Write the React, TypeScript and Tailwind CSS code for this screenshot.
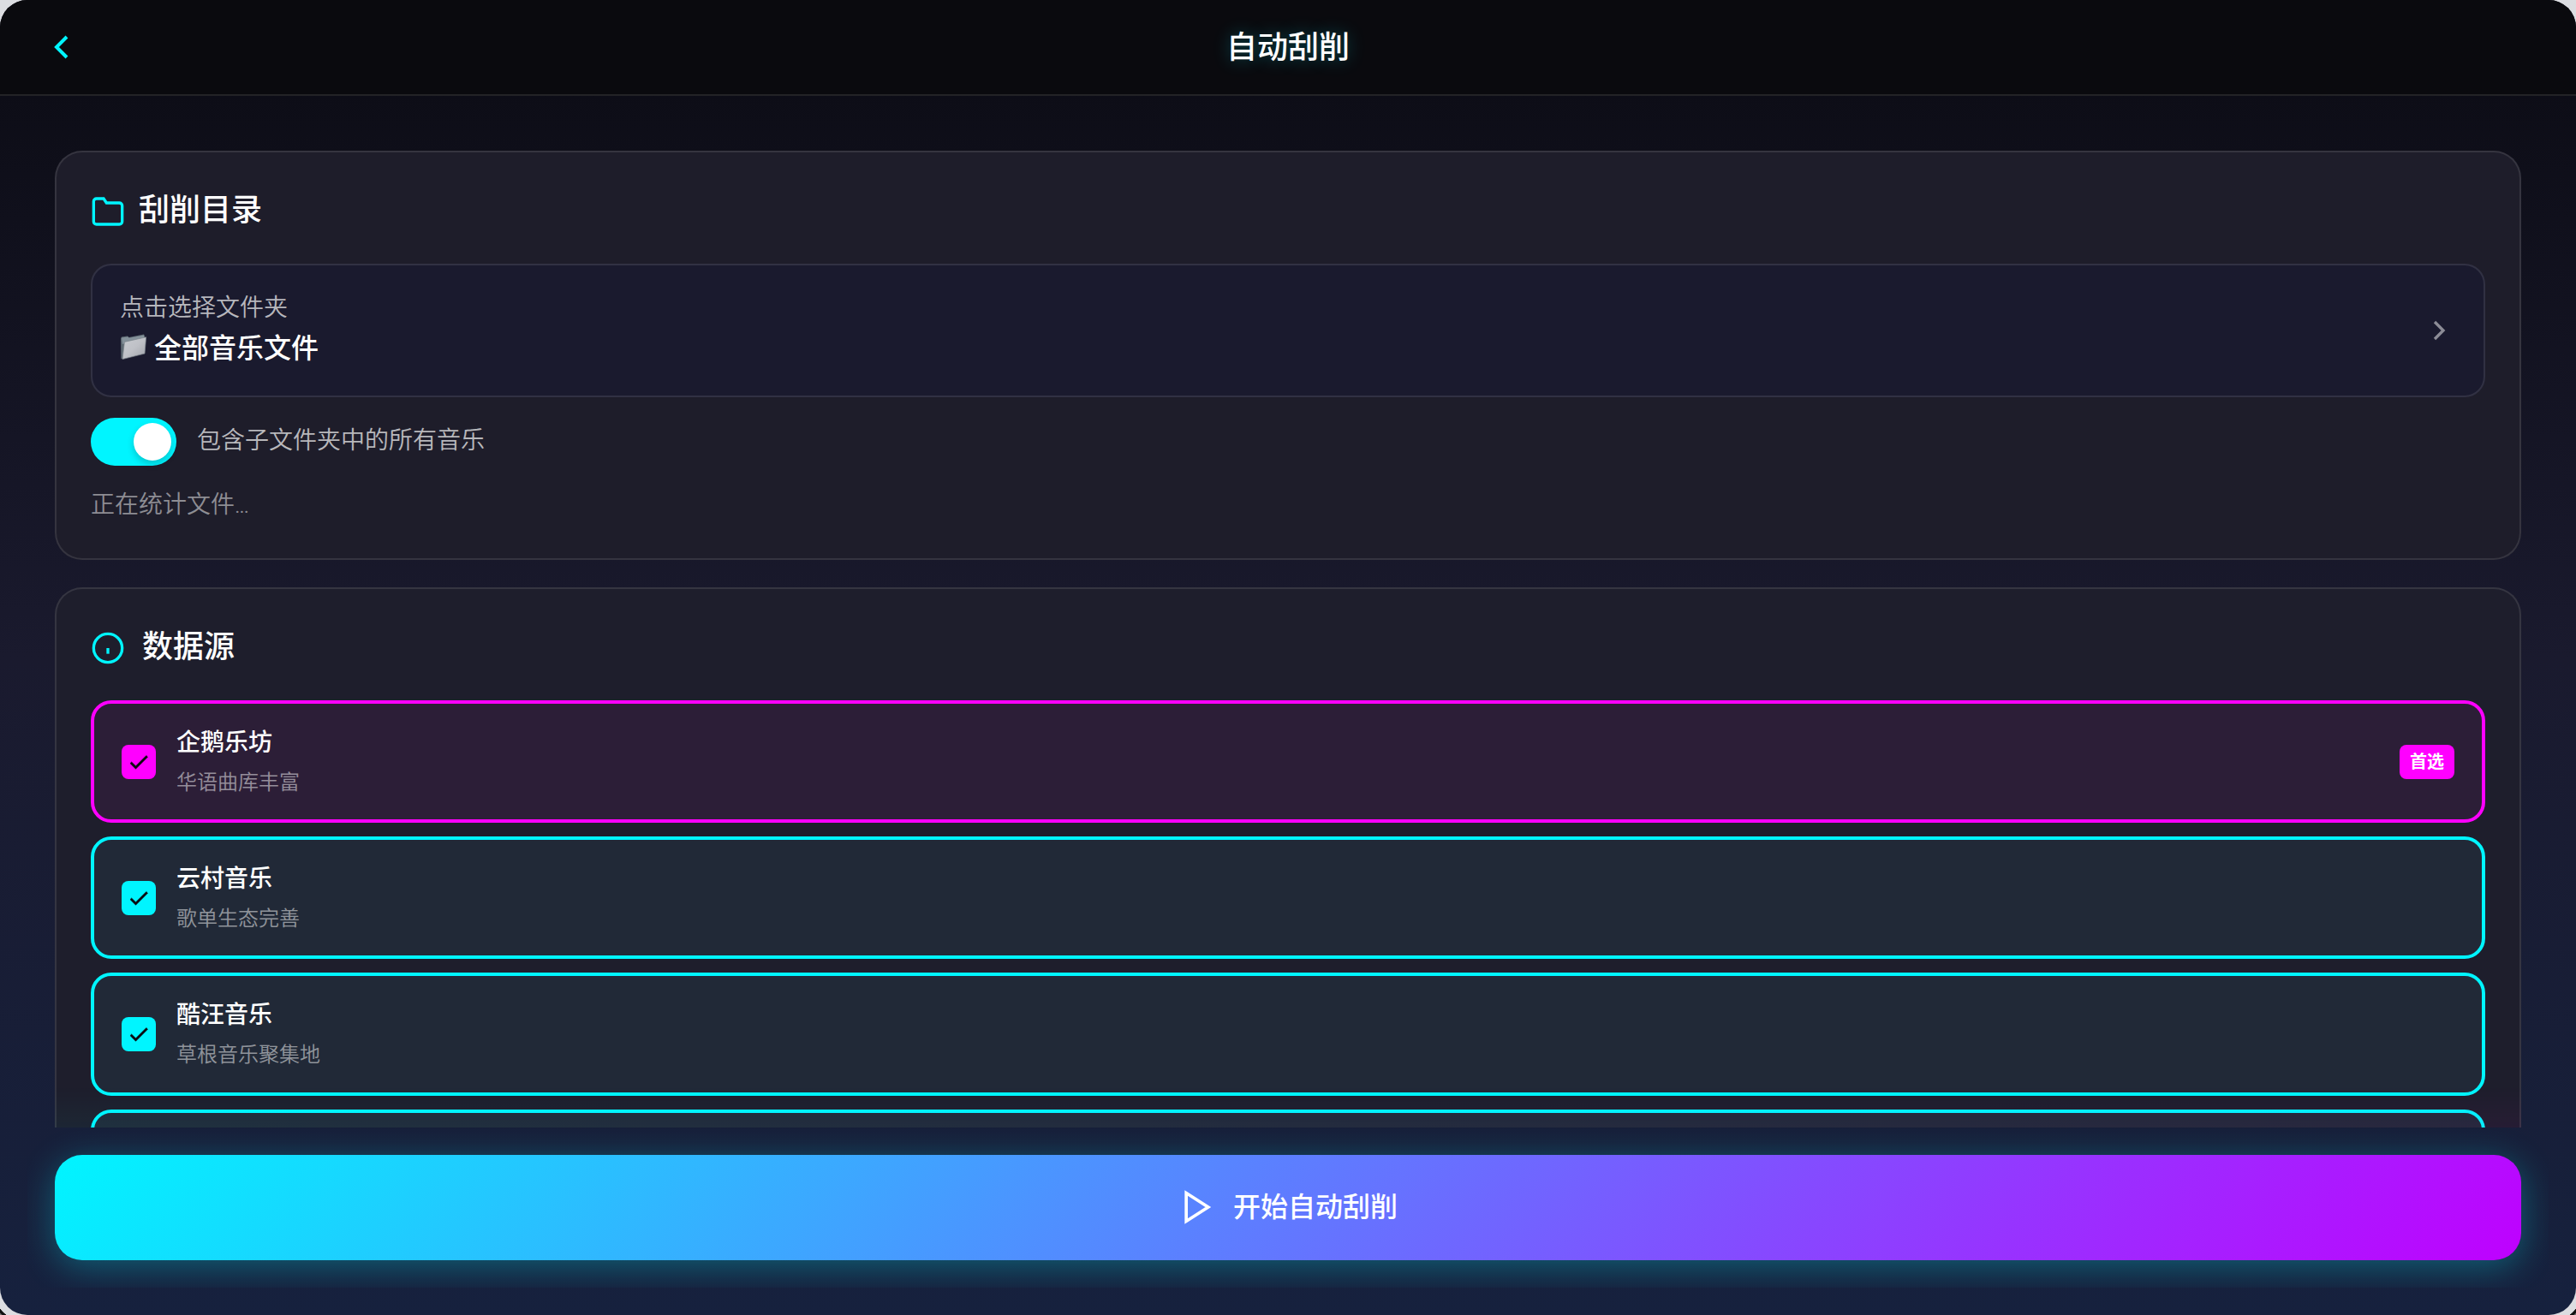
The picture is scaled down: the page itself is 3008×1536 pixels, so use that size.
import React from "react";

type Source = { name: string; desc: string; preferred?: boolean };

const sources: Source[] = [
  { name: "企鹅乐坊", desc: "华语曲库丰富", preferred: true },
  { name: "云村音乐", desc: "歌单生态完善" },
  { name: "酷汪音乐", desc: "草根音乐聚集地" },
  { name: "", desc: "" },
];

function FolderGlyph() {
  return (
    <svg className="mr-2 size-8 shrink-0" viewBox="0 0 32 32" aria-hidden="true">
      <defs>
        <linearGradient id="folderFront" x1="0" y1="0" x2="1" y2="1">
          <stop offset="0" stopColor="#c9ccd1" />
          <stop offset="0.5" stopColor="#bfc1c7" />
          <stop offset="1" stopColor="#9fa2a9" />
        </linearGradient>
      </defs>
      <path d="M1 6.2 2 4.4l7-1 1.6 1.6L28 1.6l1 1.8v3L4 29.6l-2.6.6z" fill="#5e6a73" />
      <path d="M2 5.6 9.4 4.4l1.2 1.4L28 2.6v3L3 13z" fill="#84919a" />
      <path d="M5.4 10.4 30.6 4.8 29 24 3 30.6z" fill="url(#folderFront)" stroke="#7d858c" strokeWidth=".7" />
    </svg>
  );
}

function SourceRow({ source }: { source: Source }) {
  const tone = source.preferred ? "border-[#ff00ff] bg-[#2c1e37]" : "border-[#00f5ff] bg-[#212937]";
  return (
    <div className={`flex h-[143.2px] shrink-0 items-center rounded-3xl border-4 px-8 ${tone}`}>
      <div
        className={`flex size-10 items-center justify-center rounded-lg ${source.preferred ? "bg-[#ff00ff]" : "bg-[#00f5ff]"}`}
      >
        <svg className="size-7" viewBox="0 0 24 24" fill="#0a0a0f" stroke="#0a0a0f" strokeWidth="0.5">
          <path d="M9 16.17 4.83 12l-1.42 1.41L9 19 21 7l-1.41-1.41z" />
        </svg>
      </div>
      <div className="ml-6 flex-1">
        <div className="mb-1 text-[28px] leading-[1.6] font-medium">{source.name}</div>
        <div className="text-2xl leading-[1.6] font-[350] text-white/50">{source.desc}</div>
      </div>
      {source.preferred && (
        <span className="flex h-10 items-center rounded-lg bg-[#ff00ff] px-3 text-xl font-semibold">首选</span>
      )}
    </div>
  );
}

export default function App() {
  return (
    <div className="h-[1536px] w-[3008px] bg-[#dcdde1] bg-[image:radial-gradient(circle_at_100%_0,#dcdde1_40px,#111_40.5px,#111_43px,#777_44px),radial-gradient(circle_at_0_0,#dcdde1_40px,#111_40.5px,#111_43px,#777_44px)] bg-[size:32px_32px] bg-[position:left_bottom,right_bottom] bg-no-repeat font-['Roboto','Noto_Sans_CJK_SC',sans-serif] text-white">
      <div className="flex h-full flex-col overflow-hidden rounded-[32px] bg-[linear-gradient(180deg,#0b0b13_0%,#1a1a2e_50%,#16213e_100%)]">
        <header className="grid h-28 shrink-0 grid-cols-[1fr_auto_1fr] items-center border-b-2 border-white/10 bg-[#0a0a0e] px-12">
          <svg className="size-12" viewBox="0 0 24 24" fill="none" stroke="#00f5ff" strokeWidth="2">
            <path d="M15 18l-6-6 6-6" />
          </svg>
          <h1 className="pt-1 text-4xl leading-[1.6] font-medium [text-shadow:0_0_20px_rgba(0,245,255,0.3)]">
            自动刮削
          </h1>
        </header>

        <main className="relative flex min-h-0 flex-1 flex-col gap-8 overflow-hidden px-16 pt-16">
          <section className="shrink-0 rounded-[32px] border-2 border-white/10 bg-[#1e1d2a] p-10">
            <div className="mb-8 flex items-center">
              <svg className="size-10" viewBox="0 0 24 24" fill="none" stroke="#00f5ff" strokeWidth="2">
                <path d="M22 19a2 2 0 0 1-2 2H4a2 2 0 0 1-2-2V5a2 2 0 0 1 2-2h5l2 3h9a2 2 0 0 1 2 2z" />
              </svg>
              <h2 className="ml-4 text-4xl leading-[1.6] font-medium">刮削目录</h2>
            </div>
            <div className="flex h-[156px] items-center justify-between rounded-3xl border-2 border-white/10 bg-[#1a1a2e] px-8">
              <div>
                <div className="text-[28px] leading-[1.6] font-[350] text-white/70">点击选择文件夹</div>
                <div className="flex items-center text-[32px] leading-[1.6] font-medium">
                  <div className="-mt-1.5">
                    <FolderGlyph />
                  </div>
                  <span>全部音乐文件</span>
                </div>
              </div>
              <svg className="size-10" viewBox="0 0 24 24" fill="none" stroke="#8c8c96" strokeWidth="2">
                <path d="M9 18l6-6-6-6" />
              </svg>
            </div>
            <div className="mt-6 flex h-14 items-center">
              <div className="flex h-14 w-[100px] items-center justify-end rounded-full bg-[#00f5ff] px-1.5">
                <div className="size-11 rounded-full bg-white shadow-[0_4px_8px_rgba(0,0,0,0.2)]" />
              </div>
              <span className="ml-6 text-[28px] leading-[1.6] font-[350] text-white/70">包含子文件夹中的所有音乐</span>
            </div>
            <div className="mt-6 text-[28px] leading-[1.6] font-[350] text-white/50">
              正在统计文件<span className="tracking-[-1.4px]">...</span>
            </div>
          </section>

          <section className="shrink-0 rounded-[32px] border-2 border-white/10 bg-[#1e1e2c] p-10">
            <div className="mb-8 flex items-center">
              <svg className="size-10" viewBox="0 0 24 24" fill="none" stroke="#00f5ff" strokeWidth="2">
                <circle cx="12" cy="12" r="10" />
                <path d="M12 12v4" />
              </svg>
              <h2 className="ml-5 text-4xl leading-[1.6] font-medium">数据源</h2>
            </div>
            <div className="flex flex-col gap-4">
              {sources.map((s, i) => (
                <SourceRow key={i} source={s} />
              ))}
            </div>
          </section>

          {/* faint colour glow rising from the action button */}
          <div className="pointer-events-none absolute inset-x-16 bottom-0 h-12 bg-[linear-gradient(90deg,rgba(0,245,255,0.04),rgba(100,110,255,0.04)_50%,rgba(255,0,255,0.04))] [mask-image:linear-gradient(to_top,black,transparent)]" />
        </main>

        <footer className="mx-8 mb-8 shrink-0 overflow-hidden p-8">
          <button className="flex w-full items-center justify-center rounded-[32px] bg-[linear-gradient(135deg,#00f5ff,#bf00ff)] py-9 shadow-[0_8px_40px_rgba(0,245,255,0.3)]">
            <svg className="size-11" viewBox="0 0 24 24" fill="none" stroke="#fff" strokeWidth="2">
              <path d="M5 3l14 9-14 9V3z" />
            </svg>
            <span className="ml-5 text-[32px] leading-[1.6] font-medium">开始自动刮削</span>
          </button>
        </footer>
      </div>
    </div>
  );
}
